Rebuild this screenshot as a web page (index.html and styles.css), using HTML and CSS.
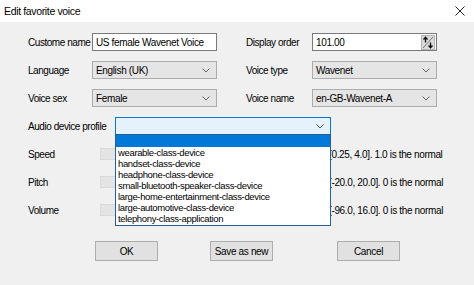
FILE: index.html
```html
<!DOCTYPE html>
<html>
<head>
    <meta charset="utf-8">
    <title>Edit favorite voice</title>
    <link rel="stylesheet" href="styles.css">
</head>
<body>
    <div class="window">
        <!-- title bar -->
        <div class="titlebar">
            <span class="title">Edit favorite voice</span>
            <svg class="close" width="10" height="10" viewBox="0 0 10 10">
                <path d="M0.5 0.5 L9.5 9.5 M9.5 0.5 L0.5 9.5" stroke="#222" stroke-width="1" fill="none"/>
            </svg>
        </div>

        <div class="form">
            <div class="row">
                <span class="label col1">Custome name</span>
                <div class="input">US female Wavenet Voice</div>
                <span class="label col3">Display order</span>
                <div class="input spin">
                    101.00
                    <svg class="spinner" width="14" height="15" viewBox="0 0 14 15">
                        <rect x="0.5" y="0.5" width="13" height="14" fill="#dadada" stroke="#b5b5b5"/>
                        <path d="M2 13 L12 2" stroke="#777" stroke-width="1"/>
                        <path d="M4.5 2.5 L4.5 7.5 M2.5 4.5 L4.5 2.2 L6.5 4.5" stroke="#111" stroke-width="1.3" fill="none"/>
                        <path d="M9.5 7.5 L9.5 12.5 M7.5 10.5 L9.5 12.8 L11.5 10.5" stroke="#111" stroke-width="1.3" fill="none"/>
                    </svg>
                </div>
            </div>

            <div class="row">
                <span class="label col1">Language</span>
                <div class="select">English (UK)<svg class="chev" width="8" height="5" viewBox="0 0 8 5"><path d="M0.5 0.5 L4 4 L7.5 0.5" stroke="#666" fill="none"/></svg></div>
                <span class="label col3">Voice type</span>
                <div class="select">Wavenet<svg class="chev" width="8" height="5" viewBox="0 0 8 5"><path d="M0.5 0.5 L4 4 L7.5 0.5" stroke="#666" fill="none"/></svg></div>
            </div>

            <div class="row">
                <span class="label col1">Voice sex</span>
                <div class="select">Female<svg class="chev" width="8" height="5" viewBox="0 0 8 5"><path d="M0.5 0.5 L4 4 L7.5 0.5" stroke="#666" fill="none"/></svg></div>
                <span class="label col3">Voice name</span>
                <div class="select">en-GB-Wavenet-A<svg class="chev" width="8" height="5" viewBox="0 0 8 5"><path d="M0.5 0.5 L4 4 L7.5 0.5" stroke="#666" fill="none"/></svg></div>
            </div>

            <div class="row">
                <span class="label wide">Audio device profile</span>
                <div class="combo">
                    <div class="select open"><svg class="chev" width="8" height="5" viewBox="0 0 8 5"><path d="M0.5 0.5 L4 4 L7.5 0.5" stroke="#555" fill="none"/></svg></div>
                    <ul class="dropdown">
                        <li class="picked">&nbsp;</li>
                        <li>wearable-class-device</li>
                        <li>handset-class-device</li>
                        <li>headphone-class-device</li>
                        <li>small-bluetooth-speaker-class-device</li>
                        <li>large-home-entertainment-class-device</li>
                        <li>large-automotive-class-device</li>
                        <li>telephony-class-application</li>
                    </ul>
                </div>
            </div>

            <div class="row">
                <span class="label short">Speed</span>
                <div class="box"></div>
                <span class="range">[0.25, 4.0]. 1.0 is the normal</span>
            </div>

            <div class="row">
                <span class="label short">Pitch</span>
                <div class="box"></div>
                <span class="range">[-20.0, 20.0]. 0 is the normal</span>
            </div>

            <div class="row">
                <span class="label short">Volume</span>
                <div class="box"></div>
                <span class="range">[-96.0, 16.0]. 0 is the normal</span>
            </div>
        </div>

        <div class="buttons">
            <button class="btn ok">OK</button>
            <button class="btn save">Save as new</button>
            <button class="btn cancel">Cancel</button>
        </div>
    </div>
</body>
</html>
```

FILE: styles.css
```css
* {
    box-sizing: border-box;
}

:root {
    --panel:     #f0f0f0;
    --field-bd:  #7a7a7a;
    --combo-bg:  #e5e5e5;
    --combo-bd:  #acacac;
    --blue:      #0078d7;
    --blue-soft: #e5f1fb;
}

html, body {
    margin: 0;
    background-color: var( --panel );
}

body {
    font-family: "Liberation Sans", Arial, sans-serif;
    font-size: 10px;
    letter-spacing: -0.35px;
    color: #000;
}

.window {
    width: 474px;
    height: 285px;
    overflow: hidden;
}

.titlebar {
    height: 22px;
    padding: 0 9px 0 4px;

    display: flex;
    align-items: center;
    justify-content: space-between;

    background-color: #fff;
    font-size: 10.5px;
}

.form {
    padding: 6px 0 0 28px;
}

.row {
    height: 28px;
    display: flex;
    align-items: center;
}

.label {
    letter-spacing: -0.45px;
}

.label.col1 { width: 64px; }
.label.col3 { width: 66px; margin-left: 29px; }
.label.wide { width: 87px; }
.label.short { width: 72px; }

.input, .select {
    width: 125px;
    height: 18px;
    padding-left: 3px;

    display: flex;
    align-items: center;
}

.input {
    background-color: #fff;
    border: 1px solid var( --field-bd );
}

.spin {
    justify-content: space-between;
    padding-right: 1px;
}

.select {
    justify-content: space-between;
    padding-right: 6px;

    background-color: var( --combo-bg );
    border: 1px solid var( --combo-bd );
}

.combo {
    position: relative;
}

.select.open {
    width: 216px;
    justify-content: flex-end;

    background-color: var( --blue-soft );
    border-color: var( --blue );
}

.dropdown {
    position: absolute;
    top: 17px;
    left: 0;
    z-index: 2;

    width: 216px;
    margin: 0;
    padding: 0 0 1px 0;
    list-style: none;

    background-color: #fff;
    border: 1px solid #2a5d94;
    font-size: 9.5px;
}

.dropdown li {
    height: 11px;
    line-height: 11px;
    padding-left: 2px;
    white-space: nowrap;
}

.dropdown li.picked {
    height: 12px;
    background-color: var( --blue );
}

.box {
    width: 16px;
    height: 12px;
    background-color: #e4e4e4;
    border: 1px solid #dadada;
}

.range {
    margin-left: 213px;
}

.buttons {
    display: flex;
    margin-top: 17px;
    padding-left: 95px;
}

.btn {
    width: 63px;
    height: 20px;
    padding: 0;

    font-family: inherit;
    font-size: 10px;
    letter-spacing: -0.35px;

    background-color: #e1e1e1;
    border: 1px solid #adadad;
}

.save { margin-left: 52px; }
.cancel { margin-left: 64px; }
```
